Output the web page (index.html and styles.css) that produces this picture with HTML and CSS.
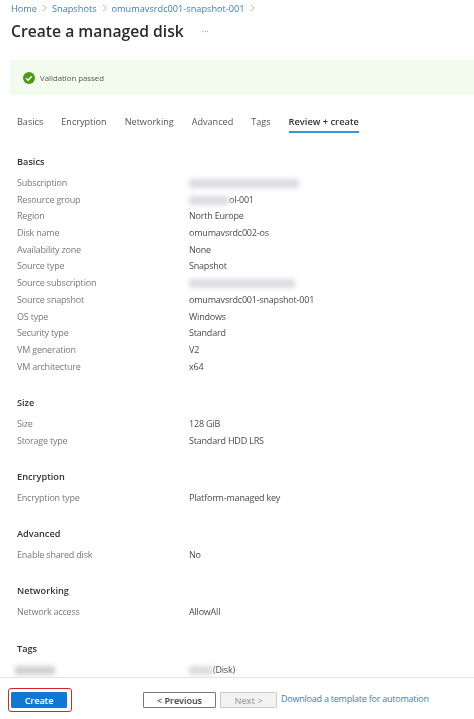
FILE: index.html
```html
<!DOCTYPE html>
<html lang="en">
<head>
<meta charset="utf-8">
<title>Create a managed disk</title>
<link rel="stylesheet" href="styles.css">
</head>
<body>
<div class="page">
  <nav class="crumbs">
    <a>Home</a><svg class="chev" viewBox="0 0 6 10"><path d="M1 1l4 4-4 4"/></svg>
    <a>Snapshots</a><svg class="chev" viewBox="0 0 6 10"><path d="M1 1l4 4-4 4"/></svg>
    <a>omumavsrdc001-snapshot-001</a><svg class="chev" viewBox="0 0 6 10"><path d="M1 1l4 4-4 4"/></svg>
  </nav>
  <header class="title-row">
    <h1>Create a managed disk</h1>
    <span class="more">···</span>
  </header>
  <div class="banner">
    <svg class="ok" viewBox="0 0 12 12"><circle cx="6" cy="6" r="6"/><path d="M3.2 6.2l2 2 3.6-4"/></svg>
    <span>Validation passed</span>
  </div>
  <div class="tabs">
    <span class="tab">Basics</span>
    <span class="tab">Encryption</span>
    <span class="tab">Networking</span>
    <span class="tab">Advanced</span>
    <span class="tab">Tags</span>
    <span class="tab active">Review + create</span>
  </div>
  <main class="content">
    <section class="group">
      <h2>Basics</h2>
      <div class="row"><span>Subscription</span><span><i class="blur w110"></i></span></div>
      <div class="row"><span>Resource group</span><span><i class="blur w40"></i>ol-001</span></div>
      <div class="row"><span>Region</span><span>North Europe</span></div>
      <div class="row"><span>Disk name</span><span>omumavsrdc002-os</span></div>
      <div class="row"><span>Availability zone</span><span>None</span></div>
      <div class="row"><span>Source type</span><span>Snapshot</span></div>
      <div class="row"><span>Source subscription</span><span><i class="blur w106"></i></span></div>
      <div class="row"><span>Source snapshot</span><span>omumavsrdc001-snapshot-001</span></div>
      <div class="row"><span>OS type</span><span>Windows</span></div>
      <div class="row"><span>Security type</span><span>Standard</span></div>
      <div class="row"><span>VM generation</span><span>V2</span></div>
      <div class="row"><span>VM architecture</span><span>x64</span></div>
    </section>
    <section class="group">
      <h2>Size</h2>
      <div class="row"><span>Size</span><span>128 GiB</span></div>
      <div class="row"><span>Storage type</span><span>Standard HDD LRS</span></div>
    </section>
    <section class="group">
      <h2>Encryption</h2>
      <div class="row"><span>Encryption type</span><span>Platform-managed key</span></div>
    </section>
    <section class="group">
      <h2>Advanced</h2>
      <div class="row"><span>Enable shared disk</span><span>No</span></div>
    </section>
    <section class="group">
      <h2>Networking</h2>
      <div class="row"><span>Network access</span><span>AllowAll</span></div>
    </section>
    <section class="group">
      <h2>Tags</h2>
      <div class="row"><span><i class="blur w40 tagkey"></i></span><span><i class="blur w24"></i>(Disk)</span></div>
    </section>
  </main>
  <footer class="actions">
    <button class="btn primary">Create</button>
    <button class="btn prev">&lt; Previous</button>
    <button class="btn next" disabled>Next &gt;</button>
    <a class="template">Download a template for automation</a>
  </footer>
</div>
</body>
</html>
```
FILE: styles.css
```css
* { box-sizing: border-box; }
html, body { margin: 0; padding: 0; background: #fff; }
body { font-family: "Open Sans", "Noto Sans", "Liberation Sans", sans-serif; color: #333; }
.page { position: relative; width: 474px; height: 719px; overflow: hidden; filter: blur(0.4px); }
.crumbs { display: flex; align-items: center; gap: 4px; padding: 0 0 0 11px; height: 16px; font-size: 9.2px; color: #3b7fc0; }
.chev { width: 5px; height: 8px; fill: none; stroke: #a5a5a5; stroke-width: 1; margin: 0 1px; }
.title-row { display: flex; align-items: center; height: 30px; padding: 0 0 0 11px; }
h1 { margin: 0; font-size: 15.7px; font-weight: 600; color: #2b2b2b; }
.more { margin-left: 18px; font-size: 9px; color: #888; }
.banner { display: flex; align-items: center; gap: 5px; height: 35px; margin: 14px 0 0 10px; padding-left: 13px; background: #f3fbee; font-size: 7.8px; color: #555; }
.ok { width: 12px; height: 12px; }
.ok circle { fill: #4f9a17; }
.ok path { fill: none; stroke: #fff; stroke-width: 1.5; }
.tabs { display: flex; gap: 18px; margin: 15px 0 0 17px; height: 23px; font-size: 9.1px; color: #555; }
.tab { line-height: 24px; height: 23px; }
.tab.active { color: #333; font-weight: 600; font-size: 9.3px; border-bottom: 2px solid #3b93d8; }
.content { padding-left: 17px; margin-top: 20px; }
.group { margin-bottom: 18.6px; }
h2 { margin: 0 0 5px; height: 17px; line-height: 17px; font-size: 9.2px; font-weight: 600; color: #333; }
.row { display: grid; grid-template-columns: 172px 1fr; height: 16.7px; line-height: 16.7px; font-size: 9px; letter-spacing: -0.2px; color: #4a4a4a; }
.row span:first-child { color: #7a7a7a; }
.blur { display: inline-block; height: 9px; vertical-align: middle; background: #dcdce0; filter: blur(2.5px); }
.w110 { width: 110px; }
.w106 { width: 106px; }
.w40 { width: 40px; }
.w24 { width: 24px; }
.tagkey { background: #d0d0d0; margin-left: -2px; }
.actions { position: absolute; top: 677px; left: 0; width: 474px; height: 42px; background: #fff; border-top: 1px solid #e3e3e3; display: flex; align-items: flex-start; padding: 14px 0 0 11px; font-size: 9px; }
.btn { height: 16px; padding: 0; font: inherit; background: #fff; border: 1px solid #777; border-radius: 1px; color: #444; font-weight: 600; }
.primary { position: relative; width: 56px; background: #0f78d4; border-color: #0f78d4; color: #fff; }
.primary::after { content: ""; position: absolute; top: -5px; left: -4px; right: -6px; bottom: -5px; border: 1.5px solid #d8232a; border-radius: 3px; }
.prev { width: 73px; margin-left: 76px; }
.next { width: 57px; margin-left: 4px; background: #f3f3f3; border-color: #ccc; color: #aaa; }
.template { margin-left: 4px; color: #3b7fc0; line-height: 14px; white-space: nowrap; letter-spacing: -0.23px; }
```
